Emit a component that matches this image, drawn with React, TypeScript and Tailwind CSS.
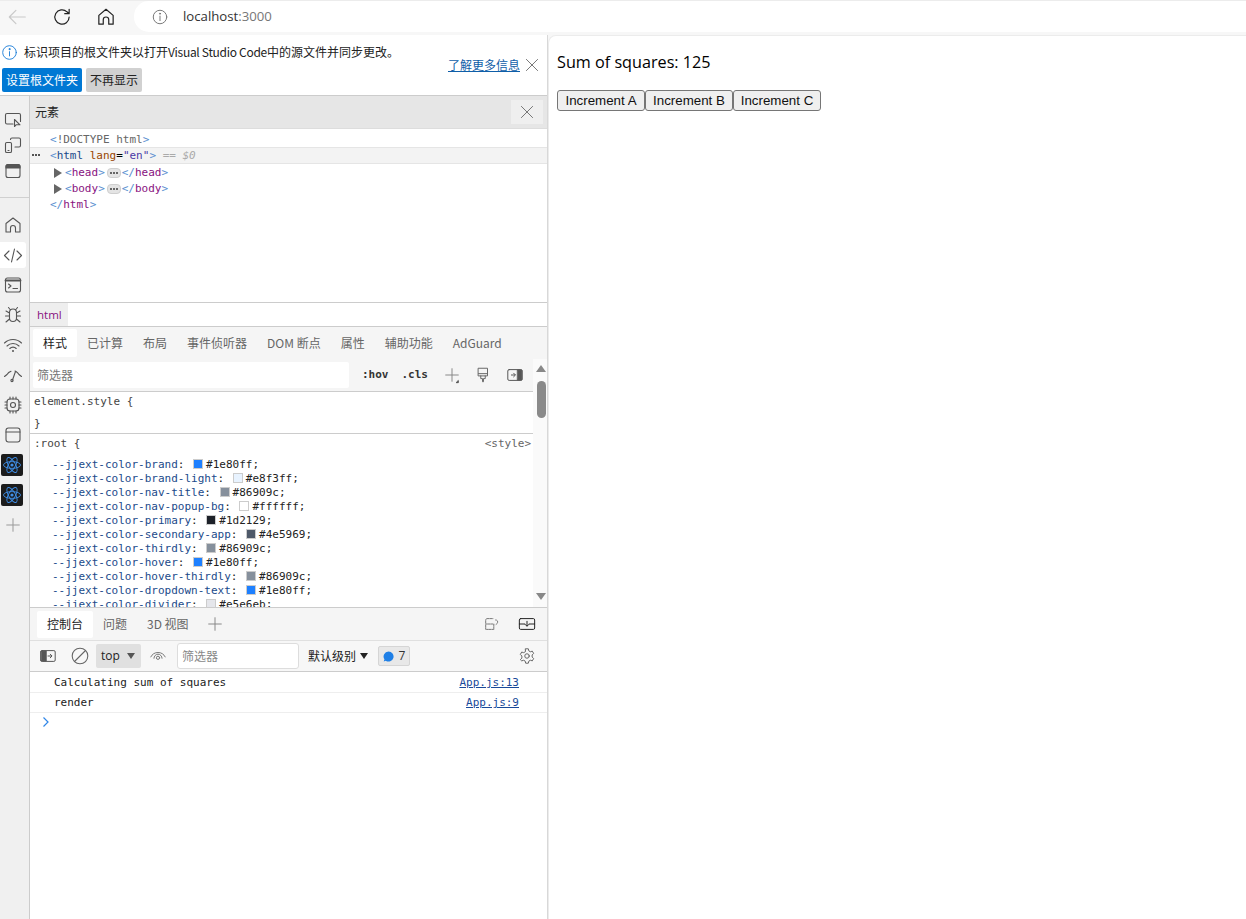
import React from 'react';

const UI = 'font-["Open_Sans","Noto_Sans_CJK_SC",sans-serif]';
const CJK = 'font-["Noto_Sans_CJK_SC","Noto_Sans",sans-serif]';
const MONO = 'font-["DejaVu_Sans_Mono",monospace]';

function Icon({ size = 20, children, className = '' }: { size?: number; children: React.ReactNode; className?: string }) {
  return (
    <svg width={size} height={size} viewBox="0 0 20 20" fill="none" stroke="currentColor" strokeWidth="1.1" strokeLinecap="round" strokeLinejoin="round" className={className}>
      {children}
    </svg>
  );
}

function ReactLogo() {
  return (
    <div className="w-[22px] h-[22px] bg-[#1c1c1c] rounded-[2px] flex items-center justify-center">
      <svg width="20" height="20" viewBox="0 0 20 20" fill="none" stroke="#3f8fe8" strokeWidth="0.9">
        <ellipse cx="10" cy="10" rx="8.5" ry="3.4" />
        <ellipse cx="10" cy="10" rx="8.5" ry="3.4" transform="rotate(60 10 10)" />
        <ellipse cx="10" cy="10" rx="8.5" ry="3.4" transform="rotate(120 10 10)" />
        <circle cx="10" cy="10" r="1.6" fill="#3f8fe8" stroke="none" />
      </svg>
    </div>
  );
}

const railTop = [
  <Icon key="inspect"><path d="M10 15H4a1.5 1.5 0 0 1-1.500-1.500V6A1.500 1.500 0 0 1 4 4.500h12A1.500 1.500 0 0 1 17.500 6v6.500" /><path d="M11.500 10.500v7l1.800-1.800 3.700.1z" /></Icon>,
  <Icon key="device"><path d="M7.500 4.500a1.500 1.500 0 0 1 1.500-1.500h7A1.500 1.500 0 0 1 17.500 4.500v6a1.500 1.500 0 0 1-1.500 1.500h-4" /><rect x="2.500" y="7.500" width="6" height="10" rx="1.300" /><path d="M5 15.500h1" /></Icon>,
  <Icon key="window"><rect x="3" y="3.500" width="14" height="13" rx="2" /><path d="M3 5.500a2 2 0 0 1 2-2h10a2 2 0 0 1 2 2v1.500H3z" fill="currentColor" /></Icon>,
];

const railBottom = [
  <Icon key="home"><path d="M3 17V8.500L10 3l7 5.500V17h-4.500v-4a2.500 2.500 0 0 0-5 0v4z" /></Icon>,
  <Icon key="code"><path d="M6 6l-4.500 4.500L6 15M14 6l4.500 4.500L14 15M11.500 4l-3 13" /></Icon>,
  <Icon key="console"><rect x="2.500" y="3" width="15" height="14" rx="2" /><path d="M2.500 5.500h15" strokeWidth="1.800" /><path d="M5.500 9l2.500 2-2.500 2M10 13.500h4.500" /></Icon>,
  <Icon key="bug"><path d="M6.500 7.500a3.500 3.500 0 0 1 7 0V13a3.500 3.500 0 0 1-7 0zM7.500 5L5.500 2.500M12.500 5l2-2.500M6.500 8L3 6M13.500 8L17 6M6.500 11H2.500M13.500 11h4M6.500 14L3 17M13.500 14l3.500 3" /></Icon>,
  <Icon key="wifi"><path d="M1.500 8a12 12 0 0 1 17 0M4 11a8.500 8.500 0 0 1 12 0M6.800 13.500a4.500 4.500 0 0 1 6.400 0" /><circle cx="10" cy="16" r="1" fill="currentColor" stroke="none" /></Icon>,
  <Icon key="gauge"><path d="M1.500 11.500L4 9.500M4 9.500a8 8 0 0 1 4-3.200M12 6l1 .5M13 6.500a8 8 0 0 1 3 3l2.500 2M12.500 6.500L9.500 15" /><circle cx="9" cy="15.500" r="1.100" /></Icon>,
  <Icon key="chip"><rect x="4" y="4" width="12" height="12" rx="3" /><circle cx="10" cy="10" r="2.500" /><path d="M7 2v2M10 2v2M13 2v2M7 16v2M10 16v2M13 16v2M2 7h2M2 10h2M2 13h2M16 7h2M16 10h2M16 13h2" /></Icon>,
  <Icon key="panel"><rect x="3" y="3" width="14" height="14" rx="2.500" /><path d="M3 7h14" /></Icon>,
];

const cssVars = [
  ['--jjext-color-brand', '#1e80ff'],
  ['--jjext-color-brand-light', '#e8f3ff'],
  ['--jjext-color-nav-title', '#86909c'],
  ['--jjext-color-nav-popup-bg', '#ffffff'],
  ['--jjext-color-primary', '#1d2129'],
  ['--jjext-color-secondary-app', '#4e5969'],
  ['--jjext-color-thirdly', '#86909c'],
  ['--jjext-color-hover', '#1e80ff'],
  ['--jjext-color-hover-thirdly', '#86909c'],
  ['--jjext-color-dropdown-text', '#1e80ff'],
  ['--jjext-color-divider', '#e5e6eb'],
];

const styleTabs = ['已计算', '布局', '事件侦听器', 'DOM 断点', '属性', '辅助功能', 'AdGuard'];

function Ellipsis() {
  return (
    <span className="inline-flex items-center justify-center w-[14px] h-[10px] ml-[2px] mr-[1px] bg-[#e4e4e4] border border-[#cfcfcf] rounded-[4px] align-[-1px] gap-[1px]">
      <i className="w-[2px] h-[2px] bg-[#666]" />
      <i className="w-[2px] h-[2px] bg-[#666]" />
      <i className="w-[2px] h-[2px] bg-[#666]" />
    </span>
  );
}

function Arrow() {
  return <span className="inline-block w-0 h-0 ml-[24px] mr-[3px] border-y-[5px] border-y-transparent border-l-[8px] border-l-[#666]" />;
}

function Toolbar() {
  return (
    <header className="h-[35px] flex items-start bg-[#f7f7f7] border-t border-[#ececec]">
      <div className="w-[134px] h-[31px] flex items-center text-[#222]">
        <Icon size={22} className="ml-[6px] text-[#c9c9c9]"><path d="M17.500 10H3M9 4l-6 6 6 6" /></Icon>
        <Icon size={22} className="ml-[23px]"><path d="M16.500 10a6.500 6.500 0 1 1-2-4.700L16.500 7M16.500 3v4h-4" /></Icon>
        <Icon size={22} className="ml-[22px]"><path d="M3.500 16.500V8.500L10 3l6.500 5.500v8H12.500V12.500a2.500 2.500 0 0 0-5 0v4z" /></Icon>
      </div>
      <div className="flex-1 h-[31px] bg-white rounded-l-[15px] flex items-center">
        <Icon size={18} className="ml-[17px] text-[#777]"><circle cx="10" cy="10" r="7.500" /><path d="M10 9v5" /><circle cx="10" cy="6.300" r=".6" fill="currentColor" /></Icon>
        <span className={`${UI} ml-[14px] text-[13.200px] text-[#333]`}>localhost<span className="text-[#777]">:3000</span></span>
      </div>
    </header>
  );
}

function InfoBar() {
  return (
    <div className={`${CJK} h-[61px] shrink-0 bg-white border-b border-[#ccc] flex justify-between text-[12px]`}>
      <div className="pl-[2px]">
        <div className="h-[33px] flex items-center pt-[1px]">
          <Icon size={17} className="text-[#1f7fd8] -ml-[1px]"><circle cx="10" cy="10" r="8" /><path d="M10 9v5" /><circle cx="10" cy="6" r=".7" fill="currentColor" /></Icon>
          <span className="ml-[6px] text-[#222]">标识项目的根文件夹以打开<span className="tracking-[-0.3px]">Visual Studio Code</span>中的源文件并同步更改。</span>
        </div>
        <div className="flex gap-[4px]">
          <button className="w-[80px] h-[24px] bg-[#0078d4] text-white rounded-[2px]">设置根文件夹</button>
          <button className="w-[56px] h-[24px] bg-[#d1d1d1] text-[#222] rounded-[2px]">不再显示</button>
        </div>
      </div>
      <div className="flex items-start pt-[20px] pr-[7px]">
        <a className="text-[#0f5ea8] underline leading-[20px]">了解更多信息</a>
        <Icon size={16} className="ml-[4px] mt-[2px] text-[#666]"><path d="M3 3l14 14M17 3L3 17" /></Icon>
      </div>
    </div>
  );
}

function Rail() {
  return (
    <aside className="w-[30px] shrink-0 bg-[#f0f0f0] border-r border-[#ccc] text-[#555] pt-[10px]">
      {railTop.map((icon, i) => (
        <div key={i} className="h-[26px] w-[25px] flex items-center justify-center">{icon}</div>
      ))}
      <div className="mt-[13px] mb-[12px] h-px bg-[#d0d0d0]" />
      {railBottom.map((icon, i) => (
        <div key={i} className={`h-[30px] flex items-center justify-center w-[25px] ${i === 1 ? 'relative' : ''}`}>
          {i === 1 && <div className="absolute left-0 top-[2px] w-[26px] h-[26px] bg-white rounded-r-[3px]" />}
          <span className="relative flex">{icon}</span>
        </div>
      ))}
      <div className="h-[30px] w-[24px] flex items-center justify-center"><ReactLogo /></div>
      <div className="h-[30px] w-[24px] flex items-center justify-center"><ReactLogo /></div>
      <div className="h-[30px] w-[25px] flex items-center justify-center text-[#999]">
        <Icon size={18}><path d="M10 3v14M3 10h14" /></Icon>
      </div>
    </aside>
  );
}

function DomTree() {
  const bracket = 'text-[#5a8fd0]';
  const tag = 'text-[#881280]';
  return (
    <div className={`${MONO} h-[173px] shrink-0 bg-white text-[11px] leading-[16px] pt-[2px]`}>
      <div className="pl-[20px] h-[16px] pt-[1px] text-[#666]"><span className={bracket}>&lt;</span>!DOCTYPE html<span className={bracket}>&gt;</span></div>
      <div className="relative h-[17px] pl-[20px] bg-[#f3f3f3] border-y border-[#e5e5e5] leading-[15px]">
        <span className="absolute left-[2px] top-[6px] flex gap-[1px]">
          <i className="w-[2px] h-[2px] bg-[#555]" /><i className="w-[2px] h-[2px] bg-[#555]" /><i className="w-[2px] h-[2px] bg-[#555]" />
        </span>
        <span className={bracket}>&lt;</span><span className="text-[#1a4a8a]">html</span> <span className="text-[#994500]">lang</span>=<span className="text-[#4a3aa6]">"en"</span><span className={bracket}>&gt;</span> <span className="text-[#aaa] italic">== $0</span>
      </div>
      <div className="h-[16px] mt-[1px] flex items-center"><Arrow /><span className={bracket}>&lt;</span><span className={tag}>head</span><span className={bracket}>&gt;</span><Ellipsis /><span className={bracket}>&lt;/</span><span className={tag}>head</span><span className={bracket}>&gt;</span></div>
      <div className="h-[16px] flex items-center"><Arrow /><span className={bracket}>&lt;</span><span className={tag}>body</span><span className={bracket}>&gt;</span><Ellipsis /><span className={bracket}>&lt;/</span><span className={tag}>body</span><span className={bracket}>&gt;</span></div>
      <div className="pl-[20px]"><span className={bracket}>&lt;/</span><span className={tag}>html</span><span className={bracket}>&gt;</span></div>
    </div>
  );
}

function StylesPane() {
  return (
    <div className="h-[280px] shrink-0 flex flex-col">
      <div className={`${CJK} h-[32px] shrink-0 bg-[#f5f5f5] flex items-center pl-[3px] text-[12px] text-[#666]`}>
        <div className="h-[28px] w-[44px] bg-white rounded-[2px] flex items-center justify-center text-[#222]">样式</div>
        <div className="flex">
          {styleTabs.map((t) => (
            <span key={t} className="px-[10px]">{t}</span>
          ))}
        </div>
      </div>
      <div className="flex-1 min-h-0 flex">
        <div className="flex-1 min-w-0 flex flex-col">
          <div className="h-[33px] shrink-0 bg-[#f5f5f5] border-b border-[#ccc] flex items-center pl-[3px]">
            <div className={`${CJK} w-[316px] h-[26px] bg-white rounded-[2px] pl-[4px] text-[12px] text-[#777] flex items-center`}>筛选器</div>
            <span className={`${MONO} ml-[13px] text-[11px] font-bold text-[#333]`}>:hov</span>
            <span className={`${MONO} ml-[13px] text-[11px] font-bold text-[#333]`}>.cls</span>
            <Icon size={18} className="ml-[15px] text-[#888]"><path d="M10 3v14M3 10h14" /><path d="M17 16.500v2h-2z" fill="#555" stroke="#555" /></Icon>
            <Icon size={18} className="ml-[13px] text-[#666]"><path d="M5 2.500h10V11H5zM5 8.500h10M7.500 11v3h2v3.500h1V14h2v-3" /></Icon>
            <Icon size={18} className="ml-[14px] text-[#555]"><rect x="2" y="4" width="16" height="12" rx="1.500" /><path d="M13 4.500h4.500v11H13z" fill="currentColor" /><path d="M6 10h4M8.500 8l2 2-2 2" /></Icon>
          </div>
          <div className={`${MONO} flex-1 min-h-0 overflow-hidden bg-white text-[11px] text-[#444]`}>
            <div className="h-[42px] border-b border-[#ccc] pl-[4px] leading-[19px]">
              <div className="h-[21px]">element.style {'{'}</div>
              <div className="h-[20px] leading-[21px]">{'}'}</div>
            </div>
            <div className="flex justify-between h-[24px] pl-[4px] pr-[2px] leading-[19px]">
              <span>:root {'{'}</span>
              <span className="text-[#666]">&lt;style&gt;</span>
            </div>
            {cssVars.map(([name, color]) => (
              <div key={name} className="h-[14px] leading-[14px] pl-[22px] whitespace-pre text-[#222]">
                <span className="text-[#1a4a8a]">{name}</span>:{' '}
                <span className="inline-block w-[10px] h-[10px] ml-[2px] mr-[3px] align-[-1px] border border-[#ccc]" style={{ backgroundColor: color }} />
                {color};
              </div>
            ))}
          </div>
        </div>
        <div className="w-[14px] shrink-0 bg-[#fafafa] flex flex-col items-center pl-[2px]">
          <span className="mt-[6px] w-0 h-0 border-x-[5px] border-x-transparent border-b-[7px] border-b-[#888]" />
          <span className="mt-[9px] w-[9px] h-[37px] bg-[#8a8a8a] rounded-[5px]" />
          <span className="mt-auto mb-[7px] w-0 h-0 border-x-[5px] border-x-transparent border-t-[7px] border-t-[#888]" />
        </div>
      </div>
    </div>
  );
}

function ConsoleDrawer() {
  return (
    <div className="flex-1 min-h-0 border-t border-[#ccc] bg-white">
      <div className={`${CJK} h-[33px] bg-[#f5f5f5] border-b border-[#e0e0e0] flex items-center text-[12px] text-[#666]`}>
        <div className="ml-[7px] w-[56px] h-[27px] bg-white rounded-[2px] flex items-center justify-center text-[#222]">控制台</div>
        <span className="ml-[10px]">问题</span>
        <span className="ml-[20px]">3D 视图</span>
        <Icon size={18} className="ml-[17px] text-[#888]"><path d="M10 3v14M3 10h14" /></Icon>
        <Icon size={18} className="ml-auto text-[#777]"><path d="M3 9V5.500A1.500 1.500 0 0 1 4.500 4H11M3 10h9v6H3zM14 5.500c2.500 0 3.500 3 .5 5" strokeDasharray="2 1" /></Icon>
        <Icon size={18} className="ml-[17px] mr-[11px] text-[#222]"><rect x="1.500" y="4" width="17" height="12" rx="1.500" /><path d="M1.500 10h6M12.500 10h6M10 7v5M8 10.500l2 2 2-2" /></Icon>
      </div>
      <div className="h-[31px] bg-[#f7f7f7] border-b border-[#ccc] flex items-center">
        <Icon size={18} className="ml-[9px] text-[#555]"><rect x="2" y="4" width="16" height="12" rx="1.500" /><path d="M2.500 4.500H8v11H2.500z" fill="currentColor" /><path d="M10 10h4M12.500 8l2 2-2 2" /></Icon>
        <Icon size={20} className="ml-[13px] text-[#666]"><circle cx="10" cy="10" r="7.800" /><path d="M4.500 15.500l11-11" /></Icon>
        <div className={`${UI} ml-[6px] w-[45px] h-[24px] bg-[#e0e0e0] rounded-[2px] flex items-center pl-[5px] text-[12px] text-[#222]`}>
          top
          <span className="ml-[7px] w-0 h-0 border-x-[4px] border-x-transparent border-t-[6px] border-t-[#555]" />
        </div>
        <Icon size={18} className="ml-[8px] text-[#777]"><path d="M2 11a9 9 0 0 1 16 0" /><path d="M5.500 12.500a4.500 4.500 0 1 1 9 0" /><circle cx="10" cy="12" r="1.800" /></Icon>
        <div className={`${CJK} ml-[10px] w-[122px] h-[26px] bg-white border border-[#ddd] rounded-[3px] pl-[4px] flex items-center text-[12px] text-[#888]`}>筛选器</div>
        <span className={`${CJK} ml-[9px] text-[12px] text-[#222]`}>默认级别</span>
        <span className="ml-[4px] w-0 h-0 border-x-[4px] border-x-transparent border-t-[6px] border-t-[#222]" />
        <div className={`${UI} ml-[10px] w-[32px] h-[20px] bg-[#e8e8e8] border border-[#d5d5d5] rounded-[2px] flex items-center justify-center gap-[5px] text-[12px] text-[#333]`}>
          <svg width="11" height="11" viewBox="0 0 12 12"><path d="M6 .5a5.500 5.500 0 1 1-3 10.100L.8 11.500l.8-2.400A5.500 5.500 0 0 1 6 .5z" fill="#1e7fe6" /></svg>
          7
        </div>
        <Icon size={18} className="ml-auto mr-[11px] text-[#666]"><circle cx="10" cy="10" r="2.500" /><path d="M8.500 2h3l.5 2.300 1.700 1 2.200-.7 1.500 2.600-1.700 1.600v2.400l1.700 1.600-1.500 2.600-2.200-.7-1.700 1-.5 2.300h-3l-.5-2.300-1.700-1-2.200.7L2.600 14l1.700-1.600V10L2.600 8.300 4.100 5.600l2.200.7 1.700-1z" /></Icon>
      </div>
      <div className={`${MONO} text-[11px] text-[#222]`}>
        <div className="h-[21px] pt-[3px] border-b border-[#eee] flex items-center justify-between pl-[24px] pr-[28px]">
          <span>Calculating sum of squares</span>
          <a className="text-[#1a4a9a] underline">App.js:13</a>
        </div>
        <div className="h-[20px] pt-[2px] border-b border-[#eee] flex items-center justify-between pl-[24px] pr-[28px]">
          <span>render</span>
          <a className="text-[#1a4a9a] underline">App.js:9</a>
        </div>
        <div className="h-[18px] pl-[12px] flex items-center text-[#2f86e8]">
          <svg width="8" height="12" viewBox="0 0 8 12" fill="none" stroke="currentColor" strokeWidth="1.200"><path d="M1.500 1.500L6 6l-4.500 4.500" /></svg>
        </div>
      </div>
    </div>
  );
}

function DevTools() {
  return (
    <section className="w-[548px] shrink-0 h-full flex flex-col bg-white border-r border-[#d8d8d8]">
      <InfoBar />
      <div className="flex-1 min-h-0 flex">
        <Rail />
        <div className="flex-1 min-w-0 flex flex-col">
          <div className={`${CJK} h-[33px] shrink-0 bg-[#e6e6e6] flex items-center justify-between pl-[5px] pr-[4px] text-[12px] text-[#222] border-b border-[#ddd]`}>
            元素
            <div className="w-[32px] h-[24px] bg-[#efefef] flex items-center justify-center text-[#666]">
              <Icon size={16}><path d="M3 3l14 14M17 3L3 17" /></Icon>
            </div>
          </div>
          <DomTree />
          <div className="h-[25px] shrink-0 border-y border-[#ccc] bg-white flex">
            <span className={`${UI} flex items-center w-[38px] pl-[7px] bg-[#eee] text-[11.500px] text-[#881280]`}>html</span>
          </div>
          <StylesPane />
          <ConsoleDrawer />
        </div>
      </div>
    </section>
  );
}

function Page() {
  const btn = 'w-[88px] h-[21px] bg-[#efefef] border border-[#767676] rounded-[3px] text-[13.330px] font-["Liberation_Sans",sans-serif] text-[#111]';
  return (
    <main className="flex-1 h-full bg-white rounded-tl-[8px] border-t border-l border-[#ececec] pl-[8px]">
      <p className={`${UI} text-[16.200px] text-black mt-[13px] leading-[26px]`}>Sum of squares: 125</p>
      <div className="flex mt-[15px]">
        <button className={btn}>Increment A</button>
        <button className={btn}>Increment B</button>
        <button className={btn}>Increment C</button>
      </div>
    </main>
  );
}

export default function App() {
  return (
    <div className="w-[1246px] h-[919px] overflow-hidden flex flex-col bg-[#f7f7f7]">
      <Toolbar />
      <div className="flex-1 min-h-0 flex">
        <DevTools />
        <Page />
      </div>
    </div>
  );
}
